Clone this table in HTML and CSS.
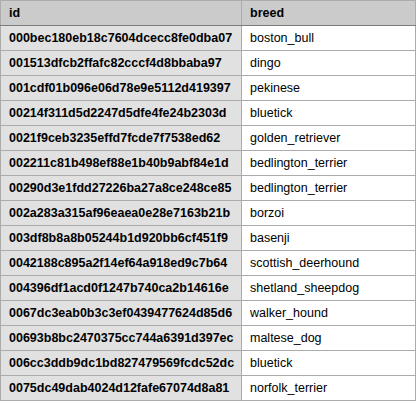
FILE: index.html
```html
<!DOCTYPE html>
<html>
<head>
<meta charset="utf-8">
<link rel="stylesheet" href="styles.css">
</head>
<body>
<table class="grid">
  <thead>
    <tr><th class="c-id">id</th><th class="c-breed">breed</th></tr>
  </thead>
  <tbody>
    <tr><td class="key">000bec180eb18c7604dcecc8fe0dba07</td><td>boston_bull</td></tr>
    <tr><td class="key">001513dfcb2ffafc82cccf4d8bbaba97</td><td>dingo</td></tr>
    <tr><td class="key">001cdf01b096e06d78e9e5112d419397</td><td>pekinese</td></tr>
    <tr><td class="key">00214f311d5d2247d5dfe4fe24b2303d</td><td>bluetick</td></tr>
    <tr><td class="key">0021f9ceb3235effd7fcde7f7538ed62</td><td>golden_retriever</td></tr>
    <tr><td class="key">002211c81b498ef88e1b40b9abf84e1d</td><td>bedlington_terrier</td></tr>
    <tr><td class="key">00290d3e1fdd27226ba27a8ce248ce85</td><td>bedlington_terrier</td></tr>
    <tr><td class="key">002a283a315af96eaea0e28e7163b21b</td><td>borzoi</td></tr>
    <tr><td class="key">003df8b8a8b05244b1d920bb6cf451f9</td><td>basenji</td></tr>
    <tr><td class="key">0042188c895a2f14ef64a918ed9c7b64</td><td>scottish_deerhound</td></tr>
    <tr><td class="key">004396df1acd0f1247b740ca2b14616e</td><td>shetland_sheepdog</td></tr>
    <tr><td class="key">0067dc3eab0b3c3ef0439477624d85d6</td><td>walker_hound</td></tr>
    <tr><td class="key">00693b8bc2470375cc744a6391d397ec</td><td>maltese_dog</td></tr>
    <tr><td class="key">006cc3ddb9dc1bd827479569fcdc52dc</td><td>bluetick</td></tr>
    <tr><td class="key">0075dc49dab4024d12fafe67074d8a81</td><td>norfolk_terrier</td></tr>
  </tbody>
</table>
</body>
</html>
```

FILE: styles.css
```css
html, body {
  margin: 0;
  padding: 0;
  background: #ffffff;
}

.grid {
  border-collapse: collapse;
  width: 416px;
  table-layout: fixed;
  font-family: "Liberation Sans", Arial, sans-serif;
  font-size: 12.5px;
  color: #000000;
}

.grid th,
.grid td {
  height: 25px;
  padding: 0 8px;
  border: 1px solid #ababab;
  text-align: left;
  white-space: nowrap;
  overflow: hidden;
  box-sizing: border-box;
}

.grid th {
  background: #cbcbcb;
  font-weight: bold;
  border-bottom: 1px solid #7c7c7c;
}

.c-id {
  width: 241px;
}

.grid td.key {
  background: #e1e1e1;
  font-weight: bold;
}

.grid td {
  background: #ffffff;
}
```
